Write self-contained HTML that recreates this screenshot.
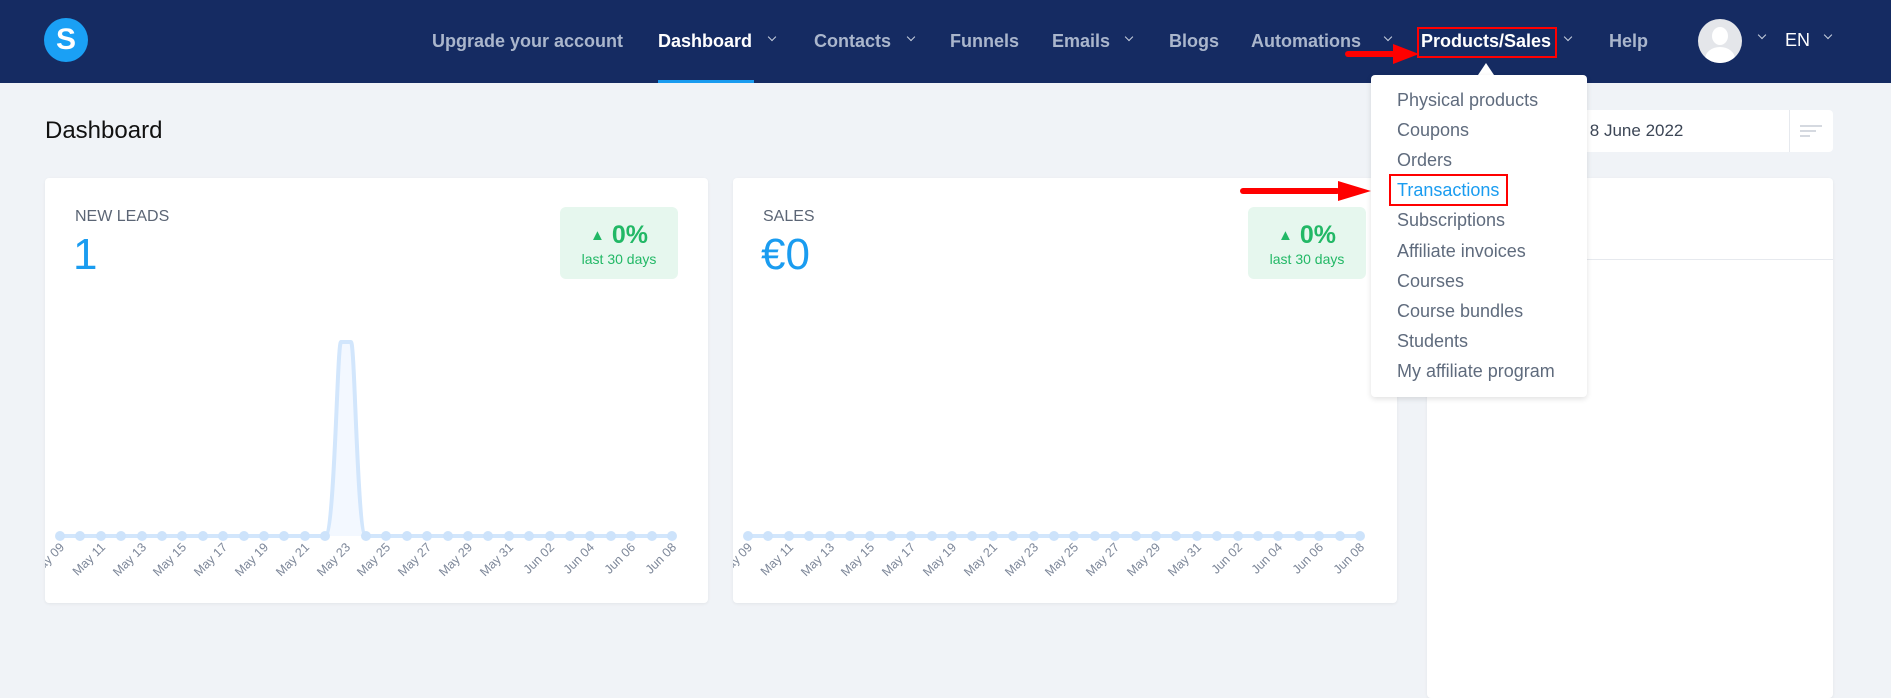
<!DOCTYPE html>
<html><head><meta charset="utf-8"><style>
*{margin:0;padding:0;box-sizing:border-box}
body{width:1891px;height:686px;overflow:hidden;background:#f0f3f7;font-family:"Liberation Sans",sans-serif;position:relative}
.nav{position:absolute;left:0;top:0;width:1891px;height:83px;background:#152b62}
.ni{position:absolute;top:31px;font-size:18px;color:#aab6cc;font-weight:bold;white-space:nowrap}
.ch{position:absolute;top:34px;width:6px;height:6px;border-right:1.5px solid #c8d0de;border-bottom:1.5px solid #c8d0de;transform:rotate(45deg)}
.card{position:absolute;background:#fff;border-radius:4px;box-shadow:0 1px 3px rgba(0,0,0,.06)}
.lbl{position:absolute;left:30px;top:30px;font-size:16px;color:#5b6575}
.big{position:absolute;left:28px;top:52px;font-size:44px;color:#1a9cf0}
.badge{position:absolute;width:118px;height:72px;background:#e6f7ee;border-radius:6px;top:29px;text-align:center;color:#22b866}
.badge .p{font-size:25px;margin-top:14px;font-weight:bold}
.badge .p span{font-size:15px;vertical-align:3px}
.badge .s{font-size:14px;margin-top:1px}
.dd{position:absolute;left:1371px;top:75px;width:216px;height:322px;background:#fff;border-radius:4px;box-shadow:0 2px 6px rgba(0,0,0,.12)}
.dd div{position:absolute;left:26px;font-size:18px;color:#5f6b7d;white-space:nowrap}
svg text{font-family:"Liberation Sans",sans-serif;font-size:12.5px;fill:#7d8799}
</style></head><body>
<div class="nav">
<div style="position:absolute;left:44px;top:18px;width:44px;height:44px;border-radius:50%;background:#1aa0f5;color:#fff;font-weight:bold;font-size:30px;text-align:center;line-height:44px">S</div>
<div class="ni" style="left:432px">Upgrade your account</div>
<div class="ni" style="left:658px;color:#fff">Dashboard</div><div class="ch" style="left:769px"></div>
<div style="position:absolute;left:658px;top:80px;width:96px;height:3px;background:#1a9cf0"></div>
<div class="ni" style="left:814px">Contacts</div><div class="ch" style="left:908px"></div>
<div class="ni" style="left:950px">Funnels</div>
<div class="ni" style="left:1052px">Emails</div><div class="ch" style="left:1126px"></div>
<div class="ni" style="left:1169px">Blogs</div>
<div class="ni" style="left:1251px">Automations</div><div class="ch" style="left:1385px"></div>
<div style="position:absolute;left:1417px;top:27px;width:140px;height:31px;border:2px solid #f00"></div>
<div class="ni" style="left:1421px;color:#fff">Products/Sales</div><div class="ch" style="left:1565px"></div>
<div class="ni" style="left:1609px">Help</div>
<div style="position:absolute;left:1698px;top:19px;width:44px;height:44px;border-radius:50%;background:#e4e6ea;overflow:hidden"><div style="position:absolute;left:14px;top:8px;width:16px;height:18px;border-radius:50%;background:#fff"></div><div style="position:absolute;left:7px;top:28px;width:30px;height:24px;border-radius:50%;background:#fff"></div></div>
<div class="ch" style="left:1759px;top:32px"></div>
<div class="ni" style="left:1785px;top:30px;color:#fff;font-weight:normal">EN</div><div class="ch" style="left:1825px;top:32px"></div>
<svg style="position:absolute;left:1345px;top:44px" width="76" height="20"><rect x="0" y="7" width="52" height="6" rx="3" fill="#f00"/><polygon points="48,0 74,10 48,20" fill="#f00"/></svg>
</div>
<div style="position:absolute;left:45px;top:117px;font-size:24px;color:#111">Dashboard</div>
<div style="position:absolute;left:1500px;top:110px;width:333px;height:42px;background:#fff;border-radius:4px">
<div style="position:absolute;left:52px;top:11px;font-size:17px;color:#3c4656">2 &nbsp;–&nbsp; 8 June 2022</div>
<div style="position:absolute;left:289px;top:0;width:1px;height:42px;background:#e6e9ee"></div>
<div style="position:absolute;left:300px;top:15px;width:22px;height:2px;background:#d5d9e0"></div>
<div style="position:absolute;left:300px;top:20px;width:16px;height:2px;background:#d5d9e0"></div>
<div style="position:absolute;left:300px;top:25px;width:10px;height:2px;background:#d5d9e0"></div>
</div>
<div class="card" style="left:45px;top:178px;width:663px;height:425px">
<div class="lbl">NEW LEADS</div><div class="big">1</div>
<div class="badge" style="left:515px"><div class="p"><span>▲</span> 0%</div><div class="s">last 30 days</div></div>
<svg style="position:absolute;left:0;top:0" width="663" height="425">
<path d="M280,358 C290,358 292,164 296,164 L306,164 C310,164 312,358 321,358Z" fill="#f3f8ff"/>
<path d="M15,358 L280,358 C290,358 292,164 296,164 L306,164 C310,164 312,358 321,358 L627,358" fill="none" stroke="#d2e6fc" stroke-width="4"/>
<g fill="#cde3fb"><circle cx="15" cy="358" r="5"/><circle cx="35" cy="358" r="5"/><circle cx="56" cy="358" r="5"/><circle cx="76" cy="358" r="5"/><circle cx="97" cy="358" r="5"/><circle cx="117" cy="358" r="5"/><circle cx="137" cy="358" r="5"/><circle cx="158" cy="358" r="5"/><circle cx="178" cy="358" r="5"/><circle cx="199" cy="358" r="5"/><circle cx="219" cy="358" r="5"/><circle cx="239" cy="358" r="5"/><circle cx="260" cy="358" r="5"/><circle cx="280" cy="358" r="5"/><circle cx="321" cy="358" r="5"/><circle cx="341" cy="358" r="5"/><circle cx="362" cy="358" r="5"/><circle cx="382" cy="358" r="5"/><circle cx="403" cy="358" r="5"/><circle cx="423" cy="358" r="5"/><circle cx="443" cy="358" r="5"/><circle cx="464" cy="358" r="5"/><circle cx="484" cy="358" r="5"/><circle cx="505" cy="358" r="5"/><circle cx="525" cy="358" r="5"/><circle cx="545" cy="358" r="5"/><circle cx="566" cy="358" r="5"/><circle cx="586" cy="358" r="5"/><circle cx="607" cy="358" r="5"/><circle cx="627" cy="358" r="5"/></g>
<g text-anchor="end">
<text transform="translate(20,370) rotate(-45)">May 09</text><text transform="translate(61,370) rotate(-45)">May 11</text><text transform="translate(102,370) rotate(-45)">May 13</text><text transform="translate(142,370) rotate(-45)">May 15</text><text transform="translate(183,370) rotate(-45)">May 17</text><text transform="translate(224,370) rotate(-45)">May 19</text><text transform="translate(265,370) rotate(-45)">May 21</text><text transform="translate(306,370) rotate(-45)">May 23</text><text transform="translate(346,370) rotate(-45)">May 25</text><text transform="translate(387,370) rotate(-45)">May 27</text><text transform="translate(428,370) rotate(-45)">May 29</text><text transform="translate(469,370) rotate(-45)">May 31</text><text transform="translate(510,370) rotate(-45)">Jun 02</text><text transform="translate(550,370) rotate(-45)">Jun 04</text><text transform="translate(591,370) rotate(-45)">Jun 06</text><text transform="translate(632,370) rotate(-45)">Jun 08</text>
</g></svg>
</div>
<div class="card" style="left:733px;top:178px;width:664px;height:425px">
<div class="lbl">SALES</div><div class="big">€0</div>
<div class="badge" style="left:515px"><div class="p"><span>▲</span> 0%</div><div class="s">last 30 days</div></div>
<svg style="position:absolute;left:0;top:0" width="664" height="425">
<path d="M15,358 L627,358" stroke="#d2e6fc" stroke-width="4"/>
<g fill="#cde3fb"><circle cx="15" cy="358" r="5"/><circle cx="35" cy="358" r="5"/><circle cx="56" cy="358" r="5"/><circle cx="76" cy="358" r="5"/><circle cx="97" cy="358" r="5"/><circle cx="117" cy="358" r="5"/><circle cx="137" cy="358" r="5"/><circle cx="158" cy="358" r="5"/><circle cx="178" cy="358" r="5"/><circle cx="199" cy="358" r="5"/><circle cx="219" cy="358" r="5"/><circle cx="239" cy="358" r="5"/><circle cx="260" cy="358" r="5"/><circle cx="280" cy="358" r="5"/><circle cx="301" cy="358" r="5"/><circle cx="321" cy="358" r="5"/><circle cx="341" cy="358" r="5"/><circle cx="362" cy="358" r="5"/><circle cx="382" cy="358" r="5"/><circle cx="403" cy="358" r="5"/><circle cx="423" cy="358" r="5"/><circle cx="443" cy="358" r="5"/><circle cx="464" cy="358" r="5"/><circle cx="484" cy="358" r="5"/><circle cx="505" cy="358" r="5"/><circle cx="525" cy="358" r="5"/><circle cx="545" cy="358" r="5"/><circle cx="566" cy="358" r="5"/><circle cx="586" cy="358" r="5"/><circle cx="607" cy="358" r="5"/><circle cx="627" cy="358" r="5"/></g>
<g text-anchor="end">
<text transform="translate(20,370) rotate(-45)">May 09</text><text transform="translate(61,370) rotate(-45)">May 11</text><text transform="translate(102,370) rotate(-45)">May 13</text><text transform="translate(142,370) rotate(-45)">May 15</text><text transform="translate(183,370) rotate(-45)">May 17</text><text transform="translate(224,370) rotate(-45)">May 19</text><text transform="translate(265,370) rotate(-45)">May 21</text><text transform="translate(306,370) rotate(-45)">May 23</text><text transform="translate(346,370) rotate(-45)">May 25</text><text transform="translate(387,370) rotate(-45)">May 27</text><text transform="translate(428,370) rotate(-45)">May 29</text><text transform="translate(469,370) rotate(-45)">May 31</text><text transform="translate(510,370) rotate(-45)">Jun 02</text><text transform="translate(550,370) rotate(-45)">Jun 04</text><text transform="translate(591,370) rotate(-45)">Jun 06</text><text transform="translate(632,370) rotate(-45)">Jun 08</text>
</g></svg>
</div>
<div class="card" style="left:1427px;top:178px;width:406px;height:520px"><div style="position:absolute;left:0;top:81px;width:406px;height:1px;background:#e6e9ee"></div></div>
<div style="position:absolute;left:1478px;top:63px;width:0;height:0;border-left:8px solid transparent;border-right:8px solid transparent;border-bottom:12px solid #fff"></div>
<div class="dd">
<div style="top:15px">Physical products</div>
<div style="top:45px">Coupons</div>
<div style="top:75px">Orders</div>
<div style="top:105px;color:#1a9cf0">Transactions</div>
<div style="top:135px">Subscriptions</div>
<div style="top:166px">Affiliate invoices</div>
<div style="top:196px">Courses</div>
<div style="top:226px">Course bundles</div>
<div style="top:256px">Students</div>
<div style="top:286px">My affiliate program</div>
</div>
<div style="position:absolute;left:1389px;top:174px;width:119px;height:32px;border:2px solid #f00"></div>
<svg style="position:absolute;left:1238px;top:181px" width="136" height="20"><rect x="2" y="7" width="100" height="6" rx="3" fill="#f00"/><polygon points="100,0 133,10 100,20" fill="#f00"/></svg>
</body></html>
